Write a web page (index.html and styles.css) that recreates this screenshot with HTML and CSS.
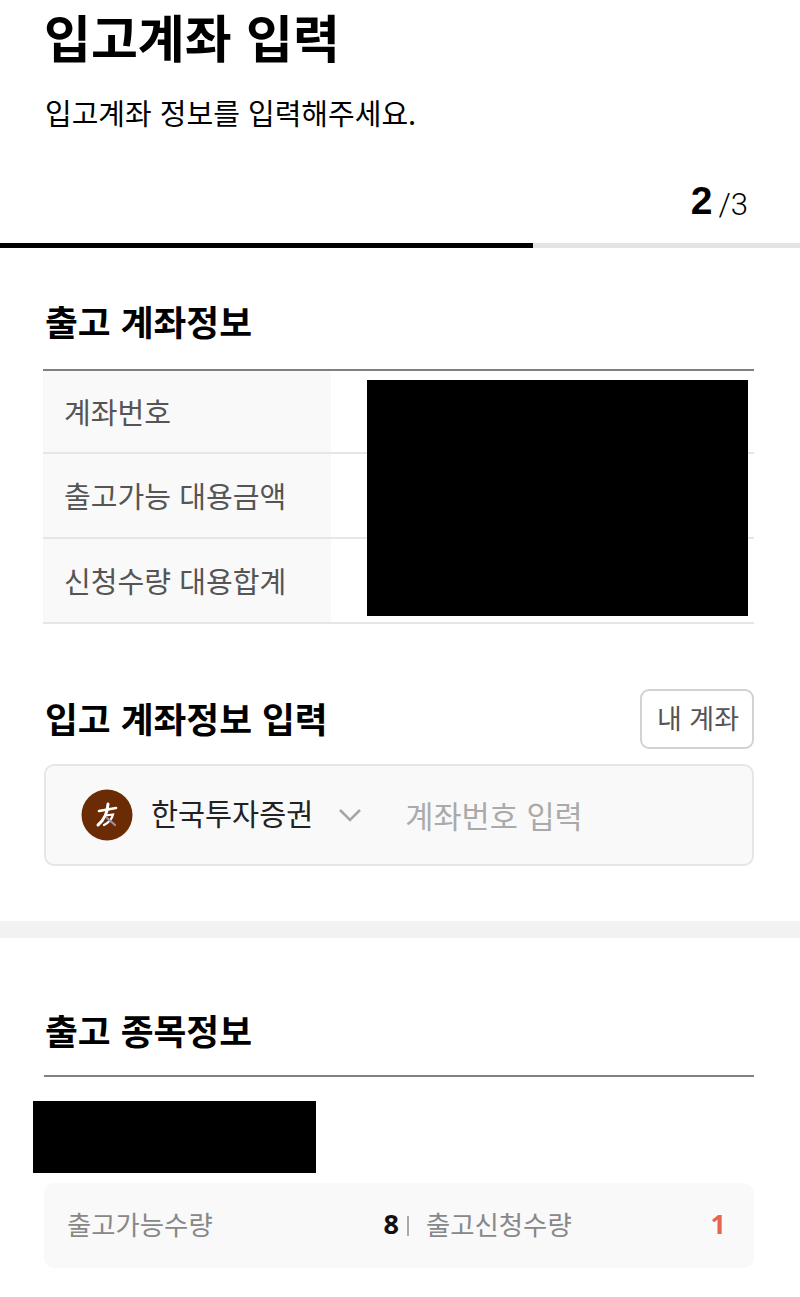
FILE: index.html
```html
<!DOCTYPE html>
<html lang="ko">
<head>
<meta charset="utf-8">
<title>입고계좌 입력</title>
<link rel="stylesheet" href="styles.css">
</head>
<body>
<header class="head">
  <h1 class="title">입고계좌 입력</h1>
  <p class="sub">입고계좌 정보를 입력해주세요.</p>
  <div class="steps"><b>2</b><span>/3</span></div>
</header>
<div class="progress"><div class="progress-fill"></div></div>
<section class="out">
  <h2 class="sec-title">출고 계좌정보</h2>
  <div class="table">
    <div class="row"><div class="label">계좌번호</div></div>
    <div class="row"><div class="label">출고가능 대용금액</div></div>
    <div class="row"><div class="label">신청수량 대용합계</div></div>
    <div class="mask"></div>
  </div>
  <div class="in-head">
    <h2 class="sec-title">입고 계좌정보 입력</h2>
    <button class="my-btn">내 계좌</button>
  </div>
  <div class="account">
    <svg class="logo" viewBox="0 0 52 52" aria-hidden="true">
      <circle cx="26" cy="26" r="25.5" fill="#6b2c05"/>
      <path d="M18 22 L35 19" stroke="#fff" stroke-width="2.6" stroke-linecap="round" fill="none"/>
      <path d="M27 15 C26.5 24 23 31 17 36" stroke="#fff" stroke-width="3" stroke-linecap="round" fill="none"/>
      <path d="M24 26.5 L32 25.5 C31 30 27 34 23 36" stroke="#fff" stroke-width="2.2" stroke-linecap="round" fill="none"/>
      <path d="M26 29 L34 36" stroke="#9a93b5" stroke-width="2.2" stroke-linecap="round" fill="none"/>
    </svg>
    <span class="bank">한국투자증권</span>
    <svg class="chev" viewBox="0 0 24 14" aria-hidden="true"><path d="M2 2 L12 12 L22 2" fill="none" stroke="#a6a6a6" stroke-width="2.6"/></svg>
    <span class="placeholder">계좌번호 입력</span>
  </div>
</section>
<div class="divider"></div>
<section class="stock">
  <h2 class="sec-title">출고 종목정보</h2>
  <div class="rule"></div>
  <div class="stock-mask"></div>
  <div class="qty">
    <div class="qty-cell qty-left"><span class="qty-label">출고가능수량</span><b class="qty-num">8</b></div>
    <span class="qty-sep"></span>
    <div class="qty-cell qty-right"><span class="qty-label">출고신청수량</span><b class="qty-num red">1</b></div>
  </div>
</section>
</body>
</html>
```
FILE: styles.css
```css
* { box-sizing: border-box; }
html, body { margin: 0; padding: 0; }
body {
  width: 800px;
  height: 1297px;
  overflow: hidden;
  background: #fff;
  color: #000;
  font-family: "Noto Sans CJK KR", "Noto Sans", sans-serif;
}
.head { padding: 3px 52px 0 45px; height: 243px; }
.title { margin: 0 0 0 -1px; font-size: 51px; line-height: 66px; font-weight: 700; }
.sub { margin: 22px 0 0; font-size: 29px; line-height: 42px; font-weight: 400; }
.steps { margin-top: 46px; display: flex; justify-content: flex-end; align-items: baseline; height: 44px; line-height: 44px; }
.steps b { font-size: 39px; font-family: "Liberation Sans", sans-serif; font-weight: 700; }
.steps span { font-size: 31px; margin-left: 6px; font-family: "Roboto", sans-serif; font-weight: 300; position: relative; top: 1px; }
.progress { height: 5px; background: #e4e4e6; }
.progress-fill { width: 533px; height: 5px; background: #000; }
.out { padding: 48px 46px 0 43px; height: 673px; }
.sec-title { margin: 0; font-size: 35.7px; line-height: 50px; font-weight: 700; }
.out > .sec-title { padding-left: 2px; }
.table { position: relative; margin-top: 23px; border-top: 2px solid #808080; }
.row { height: 85px; border-bottom: 2px solid #e6e6e6; }
.row:first-child { height: 83px; }
.label {
  width: 288px;
  height: 100%;
  padding: 0 0 2px 21px;
  display: flex;
  align-items: center;
  background: #f9f9f9;
  color: #555;
  font-size: 29.1px;
}
.mask { position: absolute; left: 324px; top: 9px; width: 381px; height: 236px; background: #000; }
.in-head { display: flex; justify-content: space-between; align-items: center; margin-top: 65px; padding-left: 2px; }
.in-head .sec-title { padding-bottom: 3px; line-height: 47px; }
.my-btn {
  width: 114px;
  height: 60px;
  padding: 0 0 4px 2px;
  border: 2px solid #d2d2d2;
  border-radius: 9px;
  background: #fff;
  color: #555;
  font: 400 27px "Noto Sans CJK KR", sans-serif;
}
.account {
  display: flex;
  align-items: center;
  height: 102px;
  margin: 15px 0 0 1px;
  padding-left: 35px;
  border: 2px solid #e6e6e6;
  border-radius: 10px;
  background: #f9f9f9;
}
.logo { width: 52px; height: 52px; flex: none; }
.bank { margin-left: 18px; font-size: 29.4px; color: #222; position: relative; top: -3px; }
.chev { width: 24px; height: 14px; margin-left: 25px; }
.placeholder { margin-left: 43px; font-size: 30.6px; color: #aaa; }
.divider { height: 17px; background: #f2f2f2; }
.stock { padding: 67px 46px 0 44px; }
.stock .sec-title { padding-left: 1px; }
.rule { height: 2px; margin-top: 20px; background: #808080; }
.stock-mask { width: 283px; height: 72px; margin: 24px 0 0 -11px; background: #000; }
.qty {
  display: flex;
  align-items: center;
  height: 85px;
  margin-top: 10px;
  padding: 0 28px 0 23px;
  background: #f9f9f9;
  border-radius: 10px;
}
.qty-cell { display: flex; justify-content: space-between; align-items: center; }
.qty-left { width: 332px; }
.qty-right { flex: 1; }
.qty-label { font-size: 26.4px; color: #888; position: relative; top: -2px; }
.qty-num { font-size: 27px; font-weight: 700; font-family: "Noto Sans", sans-serif; color: #111; position: relative; top: -2px; }
.qty-num.red { color: #ea6350; }
.qty-sep { width: 2px; height: 20px; margin: 0 17px 0 8px; background: #aaa; }
```
